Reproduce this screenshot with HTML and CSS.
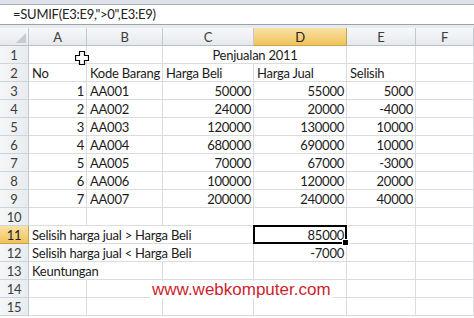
FILE: index.html
```html
<!DOCTYPE html>
<html lang="id">
<head>
  <meta charset="UTF-8">
  <title>Penjualan 2011</title>
  <link rel="stylesheet" href="styles.css">
</head>
<body>
  <div class="ribbon"></div>
  <div class="fx">=SUMIF(E3:E9,"&gt;0",E3:E9)</div>
  <div class="gap"></div>

  <div class="sheet">
    <!-- header -->
    <div class="hd corner"></div>
    <div class="hd">A</div>
    <div class="hd">B</div>
    <div class="hd">C</div>
    <div class="hd sel">D</div>
    <div class="hd">E</div>
    <div class="hd">F</div>

    <div class="rh">1</div>
    <div class="c"></div>
    <div class="c"></div>
    <div class="c span2 mid">Penjualan 2011</div>
    <div class="c"></div>
    <div class="c"></div>

    <div class="rh">2</div>
    <div class="c">No</div>
    <div class="c">Kode Barang</div>
    <div class="c">Harga Beli</div>
    <div class="c">Harga Jual</div>
    <div class="c">Selisih</div>
    <div class="c"></div>

    <div class="rh">3</div><div class="c n">1</div><div class="c">AA001</div><div class="c n">50000</div><div class="c n">55000</div><div class="c n">5000</div><div class="c"></div>
    <div class="rh">4</div><div class="c n">2</div><div class="c">AA002</div><div class="c n">24000</div><div class="c n">20000</div><div class="c n">-4000</div><div class="c"></div>
    <div class="rh">5</div><div class="c n">3</div><div class="c">AA003</div><div class="c n">120000</div><div class="c n">130000</div><div class="c n">10000</div><div class="c"></div>
    <div class="rh">6</div><div class="c n">4</div><div class="c">AA004</div><div class="c n">680000</div><div class="c n">690000</div><div class="c n">10000</div><div class="c"></div>
    <div class="rh">7</div><div class="c n">5</div><div class="c">AA005</div><div class="c n">70000</div><div class="c n">67000</div><div class="c n">-3000</div><div class="c"></div>
    <div class="rh">8</div><div class="c n">6</div><div class="c">AA006</div><div class="c n">100000</div><div class="c n">120000</div><div class="c n">20000</div><div class="c"></div>
    <div class="rh">9</div><div class="c n">7</div><div class="c">AA007</div><div class="c n">200000</div><div class="c n">240000</div><div class="c n">40000</div><div class="c"></div>

    <div class="rh">10</div><div class="c"></div><div class="c"></div><div class="c"></div><div class="c"></div><div class="c"></div><div class="c"></div>

    <div class="rh sel">11</div>
    <div class="c span3">Selisih harga jual &gt; Harga Beli</div>
    <div class="c n active">85000</div>
    <div class="c"></div><div class="c"></div>

    <div class="rh">12</div>
    <div class="c span3">Selisih harga jual &lt; Harga Beli</div>
    <div class="c n">-7000</div>
    <div class="c"></div><div class="c"></div>

    <div class="rh">13</div>
    <div class="c span2">Keuntungan</div>
    <div class="c"></div><div class="c"></div><div class="c"></div><div class="c"></div>

    <div class="rh">14</div><div class="c"></div><div class="c"></div><div class="c"></div><div class="c"></div><div class="c"></div><div class="c"></div>
    <div class="rh">15</div><div class="c"></div><div class="c"></div><div class="c"></div><div class="c"></div><div class="c"></div><div class="c"></div>

    <div class="watermark">www.webkomputer.com</div>

    <!-- mouse cursor -->
    <svg class="cursor" width="14" height="14" viewBox="0 0 14 14">
      <path d="M4.5 0.5h5v4h4v5h-4v4h-5v-4h-4v-5h4z" fill="#fff" stroke="#000" stroke-width="1.2"/>
    </svg>
  </div>
</body>
</html>
```

FILE: styles.css
```css
html, body {
  height: 318px;
}

body {
  margin: 0;
  background: #fff;
  overflow: hidden;
  font-family: Lato, "Open Sans", sans-serif;
  font-size: 13px;
  letter-spacing: -0.25px;
  color: #1b1b1b;
}

.ribbon {
  height: 4px;
  background: #dde2e8;
  border-bottom: 1px solid #a9b1bb;
}

.fx {
  height: 19px;
  line-height: 19px;
  padding-left: 13px;
  background: #fff;
  border-bottom: 1px solid #9aa3ad;
  color: #222;
}

.gap {
  height: 3px;
  background: #e8ebef;
}

.sheet {
  position: relative;
  display: grid;
  grid-template-columns: 29px 58px 76px 91px 93px 69px 1fr;
  grid-auto-rows: 18px;
}

.hd, .rh {
  background: linear-gradient(#f7f8fa, #e6e9ed);
  border-right: 1px solid #c2c7cd;
  border-bottom: 1px solid #b9bfc6;
  color: #3c3c3c;
  text-align: center;
  line-height: 18px;
  box-sizing: border-box;
}

.rh {
  background: linear-gradient(90deg, #f4f6f8, #e9ecef);
  border-bottom-color: #cfd4da;
}

.hd.sel, .rh.sel {
  background: linear-gradient(#f9e1a6, #f1c25c);
  border-color: #c9a349;
  color: #222;
}

.corner {
  position: relative;
}

.corner::after {
  content: "";
  position: absolute;
  right: 2px;
  bottom: 2px;
  border-left: 10px solid transparent;
  border-bottom: 10px solid #c6cbd1;
}

.c {
  border-right: 1px solid #dadcdf;
  border-bottom: 1px solid #dadcdf;
  box-sizing: border-box;
  padding: 1px 2px 0 3px;
  line-height: 17px;
  white-space: nowrap;
  overflow: visible;
}

.n {
  text-align: right;
  padding-right: 2px;
}

.mid {
  text-align: center;
}

.span2 {
  grid-column: span 2;
}

.span3 {
  grid-column: span 3;
}

.active {
  position: relative;
}

.active::after {
  content: "";
  position: absolute;
  left: -1px;
  top: -1px;
  right: -1px;
  bottom: -1px;
  border: 2px solid #000;
}

.active::before {
  content: "";
  position: absolute;
  right: -3px;
  bottom: -3px;
  width: 5px;
  height: 5px;
  background: #000;
  border: 1px solid #fff;
  z-index: 1;
}

.watermark {
  position: absolute;
  left: 150px;
  top: 253px;
  height: 17px;
  padding: 0 2px;
  background: #fff;
  font-family: "Liberation Sans", Arial, sans-serif;
  font-size: 17px;
  line-height: 17px;
  letter-spacing: 0;
  color: #cc1f2d;
}

.cursor {
  position: absolute;
  left: 75px;
  top: 23px;
}
```
